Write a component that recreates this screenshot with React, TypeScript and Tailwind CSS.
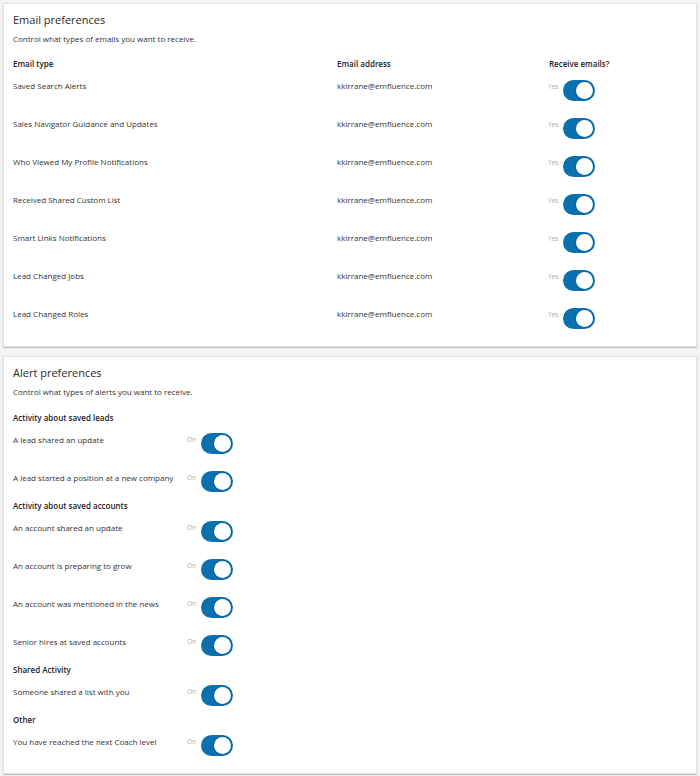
const emailRows = [
  "Saved Search Alerts",
  "Sales Navigator Guidance and Updates",
  "Who Viewed My Profile Notifications",
  "Received Shared Custom List",
  "Smart Links Notifications",
  "Lead Changed Jobs",
  "Lead Changed Roles",
];

const alertGroups = [
  {
    title: "Activity about saved leads",
    items: ["A lead shared an update", "A lead started a position at a new company"],
  },
  {
    title: "Activity about saved accounts",
    items: [
      "An account shared an update",
      "An account is preparing to grow",
      "An account was mentioned in the news",
      "Senior hires at saved accounts",
    ],
  },
  { title: "Shared Activity", items: ["Someone shared a list with you"] },
  { title: "Other", items: ["You have reached the next Coach level"] },
];

const Toggle = ({ label }: { label: string }) => (
  <div className="flex items-start">
    <span className="text-[6.5px] leading-[10px] text-[#a8a8a8] mt-[2px] mr-[5px]">{label}</span>
    <div className="relative w-[32px] h-[21px] rounded-full bg-[#0a70ae]">
      <div className="absolute right-[2px] top-[2px] w-[17px] h-[17px] rounded-full bg-white shadow-[0_0_0_1px_rgba(0,60,100,0.25)]" />
    </div>
  </div>
);

export default function App() {
  return (
    <div
      className="min-h-[776px] bg-[#f3f3f3] px-[3px] pt-[3px] text-[#333333]"
      style={{ fontFamily: '"Open Sans", "Noto Sans", sans-serif' }}
    >
      {/* Email preferences */}
      <div className="bg-white border border-[#e2e2e2] shadow-[0_1px_1px_rgba(0,0,0,0.2)] pl-[9px] pt-[8px]">
        <h2 className="text-[11px] leading-[16px] text-[#2b2b2b]">Email preferences</h2>
        <p className="text-[8px] leading-[12px] mt-[5px]">Control what types of emails you want to receive.</p>
        <div className="grid grid-cols-[324px_212px_1fr] text-[8px] leading-[12px] mt-[13px] font-semibold text-[#222]">
          <div>Email type</div>
          <div>Email address</div>
          <div>Receive emails?</div>
        </div>
        <div className="mt-[10px]">
          {emailRows.map((row) => (
            <div key={row} className="grid grid-cols-[324px_212px_1fr] h-[38px] text-[8px] leading-[12px]">
              <div>{row}</div>
              <div>kkirrane@emfluence.com</div>
              <div className="-ml-[1px]">
                <Toggle label="Yes" />
              </div>
            </div>
          ))}
        </div>
      </div>

      {/* Alert preferences */}
      <div className="mt-[9px] bg-white border border-[#e2e2e2] shadow-[0_1px_1px_rgba(0,0,0,0.2)] pl-[9px] pt-[8px] pb-[17px]">
        <h2 className="text-[11px] leading-[16px] text-[#2b2b2b]">Alert preferences</h2>
        <p className="text-[8px] leading-[12px] mt-[5px]">Control what types of alerts you want to receive.</p>
        {alertGroups.map((group, gi) => (
          <div key={group.title} className={gi === 0 ? "mt-[14px]" : "mt-[8px]"}>
            <div className="text-[8px] leading-[12px] font-semibold text-[#222]">{group.title}</div>
            <div className="mt-[9px] flex flex-col gap-[17px]">
              {group.items.map((item) => (
                <div key={item} className="flex items-start h-[21px]">
                  <div className="w-[174px] text-[8px] leading-[12px] mt-[1px] whitespace-nowrap">{item}</div>
                  <Toggle label="On" />
                </div>
              ))}
            </div>
          </div>
        ))}
      </div>
    </div>
  );
}
